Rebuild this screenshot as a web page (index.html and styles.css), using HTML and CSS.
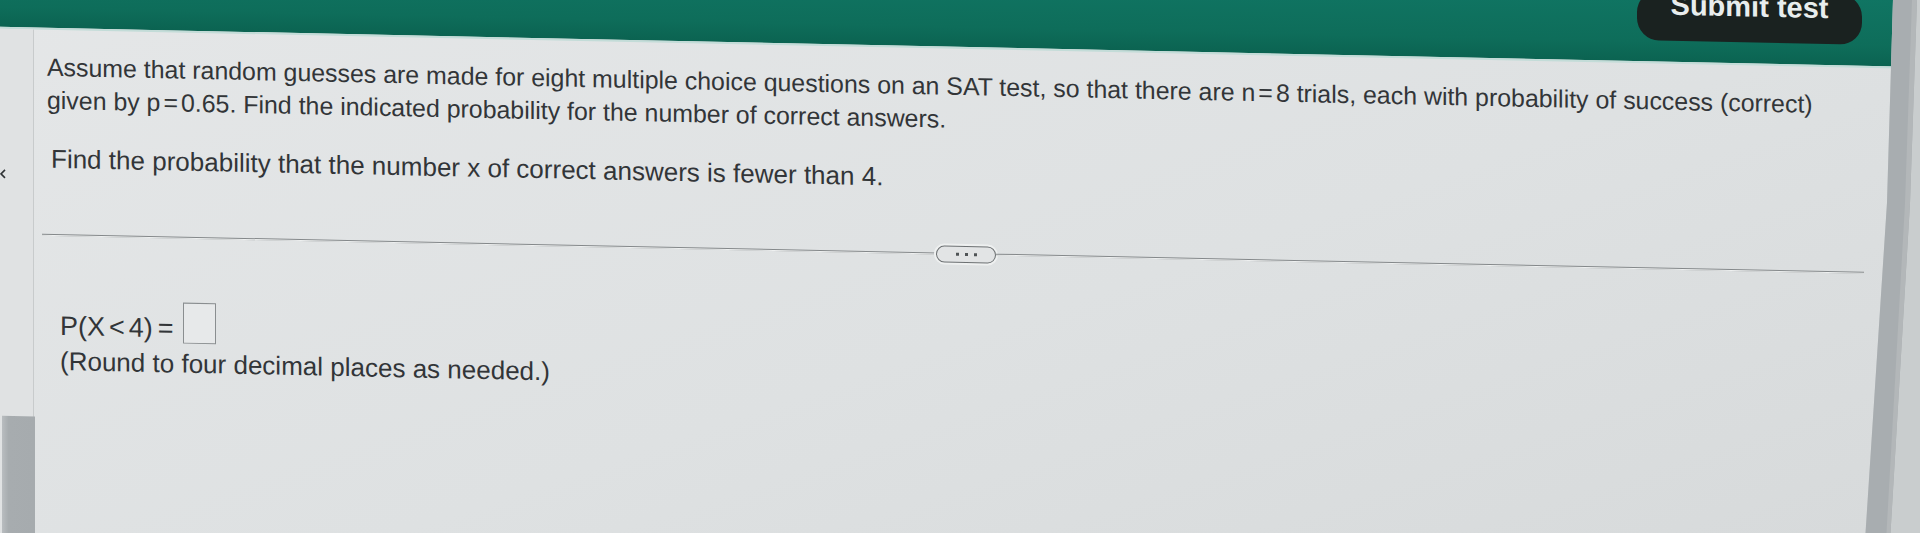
FILE: index.html
```html
<!DOCTYPE html>
<html lang="en">
<head>
<meta charset="utf-8">
<title>Question</title>
<link rel="stylesheet" href="styles.css">
</head>
<body>
<div class="screen">
  <header class="topbar">
    <button class="submit" type="button">Submit test</button>
  </header>
  <div class="body">
    <aside class="sidebar">
      <svg class="chev" width="6" height="10" viewBox="0 0 6 10"><path d="M5 1 L1 5 L5 9" fill="none" stroke="#2f3335" stroke-width="1.6"/></svg>
      <div class="side-block"></div>
    </aside>
    <main class="main">
      <section class="question">
        <p class="stem">Assume that random guesses are made for eight multiple choice questions on an SAT test, so that there are n<span class="op">=</span>8 trials, each with probability of success (correct) given by p<span class="op">=</span>0.65. Find the indicated probability for the number of correct answers.</p>
        <p class="prompt">Find the probability that the number x of correct answers is fewer than 4.</p>
      </section>
      <div class="divider">
        <span class="rule rule-left"></span>
        <span class="pill"><i></i><i></i><i></i></span>
        <span class="rule"></span>
      </div>
      <section class="answer">
        <div class="answer-line">P(X<span class="op lt">&lt;</span>4)<span class="op eq">=</span><span class="input-box"></span></div>
        <p class="note">(Round to four decimal places as needed.)</p>
      </section>
    </main>
  </div>
  <div class="edge">
    <svg width="60" height="100%" viewBox="0 0 60 580" preserveAspectRatio="none">
      <polygon points="33,0 60,0 60,580 2,580 5,533 27,200" fill="#c9cdce"/>
      <polygon points="33,0 57,0 50,200 30,533 27,580 2,580 5,533 27,200" fill="#a8adb0"/>
      <polygon points="52,0 57,0 50,200 30,533 27,580 23,580 26,533 45,200" fill="#b3b7b9"/>
    </svg>
  </div>
</div>
</body>
</html>
```

FILE: styles.css
```css
html, body {
  margin: 0;
  padding: 0;
  width: 1920px;
  height: 533px;
  overflow: hidden;
  background: #dadddd;
}

.screen {
  position: relative;
  width: 1920px;
  height: 590px;
  display: flex;
  flex-direction: column;
  transform: skewY(1.2deg);
  transform-origin: 100% 0;
  font-family: "Liberation Sans", Arial, sans-serif;
  color: #323538;
  background: linear-gradient(160deg, #e5e7e8 0%, #dee1e2 55%, #d6d9da 100%);
}

.topbar {
  height: 67px;
  flex: none;
  display: flex;
  justify-content: flex-end;
  align-items: flex-start;
  padding-right: 58px;
  background: linear-gradient(180deg, #107563 0%, #0e6d5a 70%, #0b6351 100%);
  border-bottom: 2px solid #c3dcd8;
}

.submit {
  width: 225px;
  height: 50px;
  margin-top: -4px;
  padding: 0;
  border: none;
  border-radius: 22px;
  background: #1a2220;
  color: #e8eded;
  font-family: "Liberation Sans", Arial, sans-serif;
  font-weight: 700;
  font-size: 29px;
  line-height: 29px;
  display: flex;
  justify-content: center;
  align-items: flex-start;
}

.body {
  flex: 1;
  display: flex;
}

.sidebar {
  width: 33px;
  flex: none;
  display: flex;
  flex-direction: column;
  background: #e0e2e3;
  border-right: 1px solid #c8cbcc;
}

.chev {
  margin-top: 140px;
  margin-left: 0;
}

.side-block {
  margin-top: auto;
  height: 134px;
  margin-left: 2px;
  margin-right: -2px;
  background: linear-gradient(90deg, #b9bdc0 0%, #a7acaf 20%, #a6abae 100%);
}

.main {
  flex: 1;
  padding-left: 8px;
  padding-right: 56px;
}

.question {
  padding-top: 20.5px;
  padding-left: 5px;
}

.stem, .prompt, .note {
  margin: 0;
  font-size: 26px;
  line-height: 33px;
}

.stem {
  font-size: 24.9px;
}

.prompt {
  margin-top: 26px;
  padding-left: 4px;
}

.op {
  margin: 0 3px;
}

.divider {
  margin-top: 50.5px;
  height: 18px;
  display: flex;
  align-items: center;
}

.rule {
  flex: 1;
  height: 1px;
  background: #84888a;
  border-bottom: 1px solid #eef0f0;
}

.rule-left {
  flex: none;
  width: 894px;
}

.pill {
  width: 58px;
  height: 15px;
  border: 1.5px solid #6d7173;
  border-radius: 9px;
  box-shadow: 0 0 0 2px #eef0f0;
  display: flex;
  justify-content: center;
  align-items: center;
  gap: 6px;
  background: #e2e4e5;
}

.pill i {
  width: 3px;
  height: 3px;
  background: #505456;
}

.answer {
  margin-top: 55.5px;
  padding-left: 18px;
}

.answer-line {
  font-size: 27px;
  line-height: 33px;
}

.lt {
  margin: 0 4px;
}

.eq {
  margin: 0 9px 0 5px;
}

.input-box {
  display: inline-block;
  vertical-align: text-bottom;
  width: 31px;
  height: 39px;
  border: 1px solid #8a8e90;
  background: #e7e9ea;
}

.note {
  margin-top: 2px;
}

.edge {
  position: absolute;
  top: 0;
  right: 0;
  width: 60px;
  height: 100%;
}

.edge svg {
  display: block;
}
```
